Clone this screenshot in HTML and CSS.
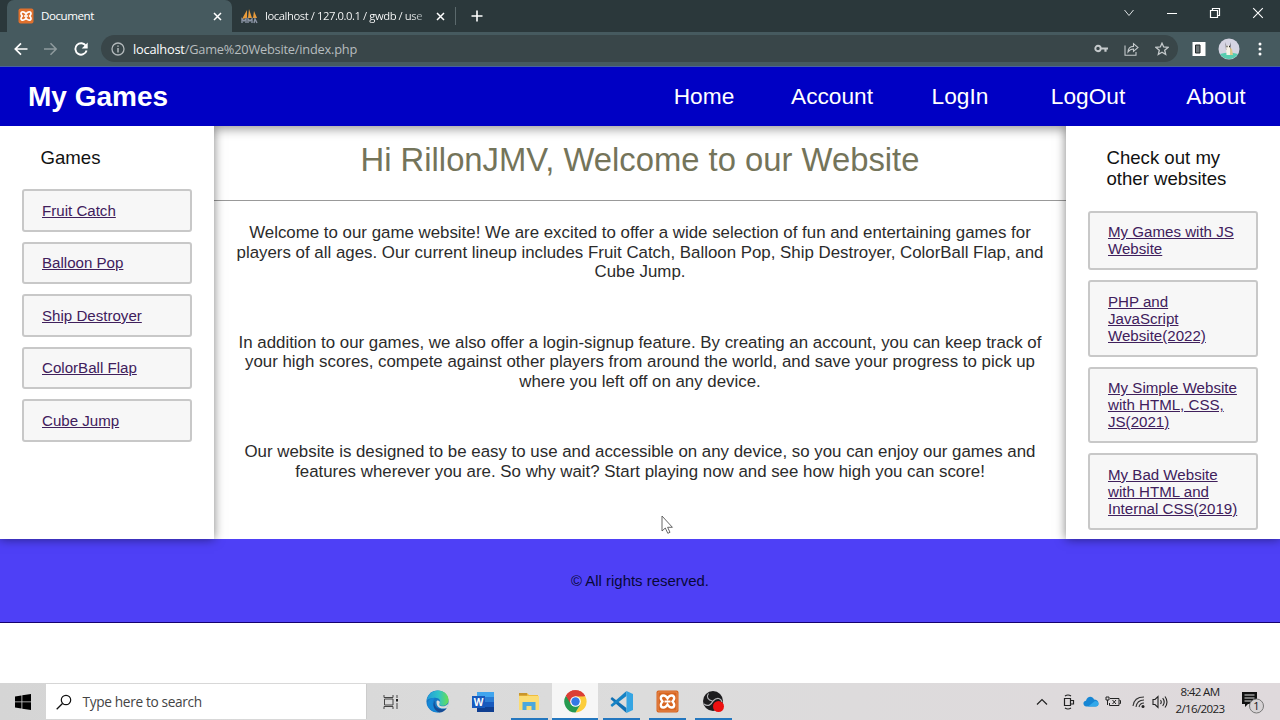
FILE: index.html
```html
<!DOCTYPE html>
<html lang="en">
<head>
    <meta charset="UTF-8">
    <meta name="viewport" content="width=device-width, initial-scale=1.0">
    <title>Document</title>
    <link rel="stylesheet" href="styles.css">
</head>
<body>
    <!-- browser window -->
    <div class="tab-bar">
        <div class="left-edge"></div>
        <div class="tab active">
            <svg width="16" height="16" viewBox="0 0 16 16"><rect x=".5" y=".5" width="15" height="15" rx="2" fill="#e0702c"/><path d="M8 6.2C6.5 3 3 3.2 3 5.6c0 1.2.8 1.7 1.3 2.4C3.800 8.700 3 9.200 3 10.400 3 12.800 6.500 13 8 9.800c1.500 3.200 5 3 5 .6 0-1.200-.8-1.700-1.300-2.400.5-.7 1.300-1.200 1.300-2.400C13 3.200 9.500 3 8 6.200zM6 8h4" fill="none" stroke="#fff" stroke-width="1.7"/></svg>
            <span class="tab-title first-title">Document</span>
            <svg class="close" width="9" height="9" viewBox="0 0 9 9"><path d="M1 1l7 7M8 1L1 8" stroke="#fff" stroke-width="1.5"/></svg>
        </div>
        <div class="tab second">
            <svg width="17" height="16" viewBox="0 0 17 16"><path d="M1 11L6 2v8zM7 10l1-9 3 9zM12 10l1-7 3 7z" fill="#e99b3a"/><path d="M1 15v-4l2 2 2-2v4M7 15v-4l2 2 2-2v4M13 15l1-4 2 4" fill="none" stroke="#8b94a5" stroke-width="1.4"/></svg>
            <span class="tab-title second-title">localhost / 127.0.0.1 / gwdb / use</span>
            <svg class="close" width="9" height="9" viewBox="0 0 9 9"><path d="M1 1l7 7M8 1L1 8" stroke="#fff" stroke-width="1.5"/></svg>
        </div>
        <svg class="new-tab" width="12" height="12" viewBox="0 0 12 12"><path d="M6 .5v11M.5 6h11" stroke="#fff" stroke-width="1.6"/></svg>
        <div class="window-buttons">
            <svg width="12" height="10" viewBox="0 0 12 10"><path d="M1.500 2l4.500 5.500L10.500 2" fill="none" stroke="#dce1e2"/></svg>
            <svg width="12" height="10" viewBox="0 0 12 10"><path d="M1 5.500h10" stroke="#fff"/></svg>
            <svg width="12" height="12" viewBox="0 0 12 12"><path d="M1.500 3.500h7v7h-7zM3.500 3V1.500h7v7H9" fill="none" stroke="#fff" stroke-width="1.200"/></svg>
            <svg width="12" height="12" viewBox="0 0 12 12"><path d="M1.200 1.200l9.600 9.600M10.800 1.200l-9.600 9.600" stroke="#fff" stroke-width="1.100"/></svg>
        </div>
    </div>
    <div class="toolbar">
        <svg width="14" height="14" viewBox="0 0 14 14"><path d="M13.500 7H1.500M7 1.300L1.300 7 7 12.700" fill="none" stroke="#fff" stroke-width="1.700"/></svg>
        <svg class="forward" width="14" height="14" viewBox="0 0 14 14"><path d="M0 7h12M6.500 1.300L12.200 7l-5.700 5.700" fill="none" stroke="#8f9b9e" stroke-width="1.500"/></svg>
        <svg class="reload" width="14" height="14" viewBox="0 0 14 14"><path d="M12 4A5.700 5.700 0 1 0 12.600 8.500" fill="none" stroke="#fff" stroke-width="1.900"/><path d="M13.700.5v6h-6z" fill="#fff"/></svg>
        <div class="address">
            <svg width="14" height="14" viewBox="0 0 14 14"><circle cx="7" cy="7" r="6" fill="none" stroke="#b3b9bb" stroke-width="1.300"/><path d="M7 6v4.500M7 3.500v1.300" stroke="#b3b9bb" stroke-width="1.500"/></svg>
            <span class="url"><b>localhost</b>/Game%20Website/index.php</span>
            <div class="address-icons">
                <svg width="14" height="10" viewBox="0 0 14 10"><circle cx="4" cy="4.500" r="2.700" fill="none" stroke="#c5cacc" stroke-width="1.900"/><path d="M6.500 4.500H14M11.500 4.500v3.200" stroke="#c5cacc" stroke-width="2.200"/></svg>
                <svg width="15" height="14" viewBox="0 0 15 14"><path d="M1 3.500v9.700h11V10M4 10c0-3.800 2-5.600 5.500-5.600V1.600L14 5.500 9.500 9.400V7C7 7 5.300 8 4 10z" fill="none" stroke="#c5cacc" stroke-width="1.100"/></svg>
                <svg width="14" height="14" viewBox="0 0 14 14"><path d="M7 1.200l1.700 3.800 4.300.4-3.300 2.800 1 4.300L7 10.300l-3.700 2.200 1-4.300L1 5.400 5.300 5z" fill="none" stroke="#c5cacc" stroke-width="1.300"/></svg>
            </div>
        </div>
        <svg class="panel-icon" width="14" height="14" viewBox="0 0 14 14"><path d="M.5 0h13v14H.5z" fill="#fff"/><path d="M3.500 3h4.500v8H3.500z" fill="#6b7476" stroke="#20282a"/></svg>
        <svg class="avatar" width="22" height="22" viewBox="0 0 22 22"><circle cx="11" cy="11" r="10.500" fill="#d5d4e2"/><path d="M2 16q9-3 18 0a10.500 10.500 0 0 1-18 0z" fill="#58cdb0"/><path d="M10 8l4 3 1 6h-5z" fill="#dfc88d"/><path d="M7.500 4l1 5h3l1.500-5-1 8h-4z" fill="#38383e"/><path d="M8 7.500h4V17H8.500z" fill="#f6f2e6"/><path d="M8.500 8.500h1M11 8.500h1" stroke="#222" stroke-width="1.500"/></svg>
        <svg class="dots" width="4" height="14" viewBox="0 0 4 14"><g fill="#fff"><circle cx="2" cy="2" r="1.500"/><circle cx="2" cy="7" r="1.500"/><circle cx="2" cy="12" r="1.500"/></g></svg>
    </div>

    <!-- website -->
    <header>
        <h1>My Games</h1>
        <nav>
            <a>Home</a>
            <a>Account</a>
            <a>LogIn</a>
            <a>LogOut</a>
            <a>About</a>
        </nav>
    </header>
    <div class="container">
        <aside>
            <h3>Games</h3>
            <ul>
                <li><a href="#">Fruit Catch</a></li>
                <li><a href="#">Balloon Pop</a></li>
                <li><a href="#">Ship Destroyer</a></li>
                <li><a href="#">ColorBall Flap</a></li>
                <li><a href="#">Cube Jump</a></li>
            </ul>
        </aside>
        <main>
            <h2>Hi RillonJMV, Welcome to our Website</h2>
            <p>Welcome to our game website! We are excited to offer a wide selection of fun and entertaining games for<br>players of all ages. Our current lineup includes Fruit Catch, Balloon Pop, Ship Destroyer, ColorBall Flap, and<br>Cube Jump.</p>
            <p>In addition to our games, we also offer a login-signup feature. By creating an account, you can keep track of<br>your high scores, compete against other players from around the world, and save your progress to pick up<br>where you left off on any device.</p>
            <p>Our website is designed to be easy to use and accessible on any device, so you can enjoy our games and<br>features wherever you are. So why wait? Start playing now and see how high you can score!</p>
        </main>
        <aside>
            <h3>Check out my<br>other websites</h3>
            <ul>
                <li><a href="#">My Games with JS<br>Website</a></li>
                <li><a href="#">PHP and<br>JavaScript<br>Website(2022)</a></li>
                <li><a href="#">My Simple Website<br>with HTML, CSS,<br>JS(2021)</a></li>
                <li><a href="#">My Bad Website<br>with HTML and<br>Internal CSS(2019)</a></li>
            </ul>
        </aside>
    </div>
    <footer>© All rights reserved.</footer>

    <svg class="cursor" width="13" height="20" viewBox="0 0 13 20"><path d="M1 1v15l3.300-3 2.500 5.300 2.200-1-2.400-5h4.800z" fill="#fff" stroke="#555" stroke-width=".9"/></svg>

    <!-- windows taskbar -->
    <div class="taskbar">
        <div class="start">
            <svg width="16" height="16" viewBox="0 0 16 16"><path d="M0 2.500l6.500-1v6H0zM7.300 1.300L16 0v7.500H7.300zM0 8.300h6.500v6.200L0 13.600zM7.300 8.300H16V16l-8.700-1.300z" fill="#000"/></svg>
        </div>
        <div class="search">
            <svg width="16" height="16" viewBox="0 0 16 16"><circle cx="10" cy="6" r="4.700" fill="none" stroke="#111" stroke-width="1.200"/><path d="M6.500 9.500L.7 15.300" stroke="#111" stroke-width="1.300"/></svg>
            <span>Type here to search</span>
        </div>
        <div class="app task-view">
            <svg width="16" height="16" viewBox="0 0 16 16"><path d="M1 1v2.500h9V1M1 15v-2.500h9V15M1.500 5h8.500v6H1.500zM14 1v3M14 9v6" fill="none" stroke="#444"/><path d="M13 5h2v2.500h-2z" fill="#222"/></svg>
        </div>
        <div class="app">
            <svg width="23" height="23" viewBox="0 0 24 24"><defs><linearGradient id="edge" x1="0" y1="0" x2="1" y2="0"><stop offset="0" stop-color="#239bd9"/><stop offset=".55" stop-color="#2fc3c9"/><stop offset="1" stop-color="#67df50"/></linearGradient></defs><circle cx="12" cy="12" r="11.500" fill="#1678c5"/><path d="M.7 11C2 4 7 .5 12.500.5 19 .5 23.500 5 23.500 10.500c0 4-3 6-6 6-4 0-4.500-2-3-3.500 1-2-.5-5-5-5C5.500 8 2 9 .7 11z" fill="url(#edge)"/><path d="M9.500 8C5 12 7 20 14 23.200 8 24 3 20 1.500 16 1 11 5 8 9.500 8z" fill="#1587d6"/><path d="M9.500 11c-2 5 1 9 8 9 2 0 4-1 4.500-1.500-2 3-5 5-8 5C8 21 6 15 9.500 11z" fill="#164c95"/><path d="M14.500 13c-1.500 2-.5 4 3 4 2 0 5-1 6-3.500-.3 2-.8 3.800-1.800 5C16 21 10.500 18 11 12c.5-2 3.500-1 3.500 1z" fill="#dcdcdc"/></svg>
        </div>
        <div class="app">
            <svg width="24" height="22" viewBox="0 0 24 22"><path d="M6 1h17v5H6z" fill="#41a5ee"/><path d="M6 6h17v5H6z" fill="#2b7cd3"/><path d="M6 11h17v5H6z" fill="#185abd"/><path d="M6 16h17v5H6z" fill="#103f91"/><path d="M1 5h13v12H1z" fill="#185abd"/><text x="7.500" y="14.500" class="word-letter" text-anchor="middle">W</text></svg>
        </div>
        <div class="app open">
            <svg width="22" height="20" viewBox="0 0 22 20"><path d="M1 1h8l2 2h9v15H1z" fill="#f0bd3c"/><path d="M1 4h20v14H1z" fill="#fbdc73"/><path d="M1 1h8v2.500H1z" fill="#c8952c"/><path d="M4.500 10h13v8h-4v-4h-5v4h-4z" fill="#4ba8dd"/></svg>
        </div>
        <div class="app open current">
            <svg width="23" height="23" viewBox="0 0 24 24"><path d="M12 12L2 6A11.500 11.500 0 0 1 22 6z" fill="#db3e35"/><path d="M12 12V6.500h10.200A11.500 11.500 0 0 1 12 23.500l5-9z" fill="#fccd3b"/><path d="M12 17l-10-11a11.500 11.500 0 0 0 10 17.500l5-8.500z" fill="#269a50"/><path d="M2 6A11.500 11.500 0 0 1 22.200 6.500H12l-5 8z" fill="#db3e35"/><circle cx="12" cy="12" r="5.600" fill="#fff"/><circle cx="12" cy="12" r="4.400" fill="#3478e5"/></svg>
        </div>
        <div class="app open">
            <svg width="23" height="22" viewBox="0 0 23 22"><path d="M2 6l14.500 11v5L.5 8z" fill="#1070b3"/><path d="M2 16L16.500 5V0L.5 14z" fill="#1683c5"/><path d="M16.500 0L23 3v16l-6.500 3z" fill="#35a5e3"/></svg>
        </div>
        <div class="app open">
            <svg width="23" height="23" viewBox="0 0 23 23"><rect x=".5" y=".5" width="22" height="22" rx="2" fill="#d76521"/><rect x="2" y="2" width="19" height="19" rx="1" fill="none" stroke="#ec9a61" stroke-width=".7"/><path d="M11.500 8.500C9 4 4.800 5 4.800 8.300c0 1.500 1 2.200 1.700 3.200-.7 1-1.700 1.700-1.700 3.200 0 3.300 4.200 4.300 6.700-.2 2.500 4.500 6.700 3.500 6.700.2 0-1.500-1-2.200-1.700-3.200.7-1 1.700-1.700 1.700-3.200C18.200 5 14 4 11.500 8.500z" fill="none" stroke="#fff" stroke-width="2.400"/><path d="M8.500 11.500h6" stroke="#fff" stroke-width="2"/></svg>
        </div>
        <div class="app open">
            <svg width="23" height="23" viewBox="0 0 23 23"><circle cx="11" cy="11" r="10" fill="#1d1c1e"/><path d="M10.500 11C6 10 4 7 6.500 3.500M11 11c-2 4-5 6-9 3M11 11c4-4 8-3 9 1" fill="none" stroke="#b8b8bb" stroke-width="1.200"/><circle cx="16.500" cy="16.500" r="5.500" fill="#ed1010"/></svg>
        </div>
        <div class="tray">
            <svg width="12" height="8" viewBox="0 0 12 8"><path d="M1 6.500l5-5 5 5" fill="none" stroke="#222" stroke-width="1.200"/></svg>
            <svg class="meet" width="12" height="16" viewBox="0 0 12 16"><path d="M1.500 4.500h6v7h-6zM8 6.500h2.500v3.500H8M2 2q3-2 6 0M2 14q3 2 6 0" fill="none" stroke="#222" stroke-width="1.200"/></svg>
            <svg class="cloud" width="16" height="11" viewBox="0 0 16 11"><path d="M3.500 10.500C-.5 10.500-.5 5 3 4.800 4 0 9.500-.5 11 3.500c2.500 0 4.500 1.500 4.500 4 0 1.800-1 3-3 3z" fill="#1686d4"/><path d="M5 10.500L12 5c2 0 3.500 1 3.500 2.800 0 1.700-1 2.700-3 2.700z" fill="#32a8ea"/></svg>
            <svg class="battery" width="16" height="12" viewBox="0 0 16 12"><path d="M5 2.500h9v7H4.500V7M14.500 4.500h1v3h-1M7.500 4l3.500 4M11 4L7.500 8M1 1h3v3H1zM2.500 4v5" fill="none" stroke="#222"/></svg>
            <svg class="wifi" width="13" height="13" viewBox="0 0 13 13"><path d="M1 11Q2 2 12 2M4 12q1-7 8-7M7 12q1-4 5-4" fill="none" stroke="#333" stroke-width="1.100"/><circle cx="11" cy="11.500" r="1.500" fill="#222"/></svg>
            <svg class="volume" width="16" height="14" viewBox="0 0 16 14"><path d="M1 4.500h2L6 1.500v11l-3-3H1zM8.500 5q1.500 2 0 4M10.700 3.200q3 3.800 0 7.600M13 1.500q4 5.500 0 11" fill="none" stroke="#222" stroke-width="1.100"/></svg>
            <div class="clock">8:42 AM<br>2/16/2023</div>
            <svg class="notes" width="24" height="24" viewBox="0 0 24 24"><path d="M1 2h15v12H7l-3 3v-3H1z" fill="#111"/><path d="M3.500 5h10M3.500 8h10M3.500 11h7" stroke="#ddd"/><circle cx="15.500" cy="16" r="7" fill="#d7d3d5" stroke="#777"/><text x="15.500" y="20" class="badge" text-anchor="middle">1</text></svg>
        </div>
    </div>
</body>
</html>
```
FILE: styles.css
```css
* {
    box-sizing: border-box;
}
body {
    margin: 0;
    height: 720px;
    overflow: hidden;
    display: flex;
    flex-direction: column;
    background-color: #fff;
    font-family: "Liberation Sans", Arial, sans-serif;
    color: #222;
}
svg {
    display: block;
    flex: none;
}

/* browser tabs and toolbar */
.tab-bar {
    height: 32px;
    flex: none;
    display: flex;
    background-color: #2b383b;
    font-family: "Open Sans", "Noto Sans", sans-serif;
    color: #fff;
}
.left-edge {
    width: 7px;
}
.tab {
    display: flex;
    align-items: center;
}
.tab.active {
    width: 225px;
    padding-left: 11px;
    background-color: #465a5f;
    border-radius: 7px 7px 0 0;
}
.tab.second {
    width: 224px;
    height: 18px;
    margin-top: 7px;
    padding-left: 9px;
    border-right: 1px solid #5b696c;
}
.tab-title {
    font-size: 11.6px;
    line-height: 16px;
    white-space: nowrap;
    letter-spacing: -0.45px;
}
.first-title {
    width: 172px;
    margin-left: 7px;
}
.second-title {
    width: 171px;
    margin-left: 7px;
    font-size: 11.3px;
    background: linear-gradient(to right, #fff 145px, #56666a 166px);
    -webkit-background-clip: text;
    background-clip: text;
    color: transparent;
}
.new-tab {
    margin: 10px 0 0 15px;
}
.window-buttons {
    display: flex;
    align-items: center;
    gap: 31px;
    height: 26px;
    margin-left: auto;
    margin-right: 16px;
}
.toolbar {
    height: 35px;
    flex: none;
    display: flex;
    align-items: center;
    padding: 0 18px 1px 14px;
    background-color: #465a5f;
    border-bottom: 1px solid #4762a0;
}
.forward {
    margin-left: 16px;
}
.reload {
    margin-left: 16px;
}
.address {
    width: 1077px;
    height: 27px;
    margin-left: 13px;
    padding: 0 9px 0 10px;
    display: flex;
    align-items: center;
    background-color: #394649;
    border-radius: 14px;
}
.url {
    margin-left: 8px;
    font-family: "Open Sans", "Noto Sans", sans-serif;
    font-size: 12.8px;
    letter-spacing: -0.21px;
    color: #b7bdbf;
}
.url b {
    font-weight: normal;
    color: #fff;
}
.address-icons {
    display: flex;
    align-items: center;
    gap: 16px;
    margin-left: auto;
}
.panel-icon {
    margin-left: 14px;
}
.avatar {
    margin-left: 12px;
}
.dots {
    margin-left: 18px;
}

/* site header */
header {
    height: 59px;
    flex: none;
    display: flex;
    align-items: center;
    background-color: #0000c4;
    color: #fff;
    box-shadow: 0 3px 10px rgba(0, 0, 0, 0.4);
    position: relative;
    clip-path: inset(0 0 -20px 0);
}
h1 {
    width: 640px;
    margin: 0;
    padding-left: 28px;
    font-size: 28px;
}
nav {
    width: 640px;
    display: flex;
}
nav a {
    flex: 1;
    text-align: center;
    font-size: 22.7px;
}

/* three column content */
.container {
    height: 413px;
    flex: none;
    display: flex;
}
aside {
    width: 214px;
    flex: none;
    padding: 20.5px 22px 0;
    background-color: #fff;
    box-shadow: 0 0 10px rgba(0, 0, 0, 0.5);
    position: relative;
    z-index: 1;
    clip-path: inset(0 -20px -20px -20px);
}
h3 {
    margin: 0 0 21px 18.5px;
    font-size: 18.6px;
    font-weight: normal;
    line-height: 21.5px;
    color: #111;
}
ul {
    margin: 0;
    padding: 0;
    list-style: none;
}
li {
    margin-bottom: 10px;
    padding: 10.75px 18px;
    border: 2px solid #c8c8c8;
    border-radius: 3px;
    background-color: #f7f7f7;
    font-size: 15.1px;
    line-height: 17px;
}
li a {
    color: #40205c;
    white-space: nowrap;
}
main {
    flex: 1;
    text-align: center;
}
h2 {
    height: 75px;
    margin: 0 0 22px;
    padding-top: 15px;
    border-bottom: 1px solid #999;
    font-size: 32.8px;
    font-weight: normal;
    line-height: 37px;
    color: #74745a;
}
p {
    margin: 0 0 50.5px;
    font-size: 16.88px;
    line-height: 19.7px;
    white-space: nowrap;
    color: #2b2b2b;
}
footer {
    height: 84px;
    flex: none;
    background-color: #4e40f6;
    border-bottom: 1px solid #15006e;
    text-align: center;
    font-size: 14.95px;
    line-height: 83px;
    color: #080838;
}
.cursor {
    position: absolute;
    left: 661px;
    top: 515px;
}

/* taskbar */
.taskbar {
    height: 37px;
    flex: none;
    margin-top: auto;
    display: flex;
    background: linear-gradient(to right, #d5d5d5, #dcdcdc 50%, #dfd9dc);
    font-family: "Open Sans", "Noto Sans", sans-serif;
}
.start {
    width: 46px;
    display: flex;
    align-items: center;
    justify-content: center;
}
.search {
    width: 321px;
    margin: 1px 0;
    padding-left: 10px;
    display: flex;
    align-items: center;
    background-color: #fff;
    border-right: 1px solid #ccc;
    font-size: 13.7px;
    letter-spacing: -0.35px;
    color: #444;
}
.search span {
    margin-left: 10.5px;
}
.app {
    width: 46px;
    display: flex;
    align-items: center;
    justify-content: center;
}
.task-view {
    width: 47px;
}
.app.open {
    background: linear-gradient(#2477bf, #2477bf) center bottom / 37px 2px no-repeat;
}
.app.current {
    background-color: #f6f6f6;
    background-size: 46px 2px;
}
.word-letter {
    font: bold 10px "Open Sans", sans-serif;
    fill: #fff;
}
.tray {
    margin-left: auto;
    padding-right: 15px;
    display: flex;
    align-items: center;
}
.meet {
    margin-left: 15px;
}
.cloud {
    margin-left: 8px;
}
.battery {
    margin-left: 6px;
}
.wifi {
    margin-left: 11px;
}
.volume {
    margin-left: 7px;
}
.clock {
    width: 50px;
    margin-left: 7px;
    padding-bottom: 2px;
    text-align: center;
    font-size: 11.6px;
    line-height: 16.5px;
    letter-spacing: -0.65px;
    white-space: nowrap;
}
.notes {
    margin-left: 16px;
}
.badge {
    font: 11px "Open Sans", sans-serif;
    fill: #111;
}
```
